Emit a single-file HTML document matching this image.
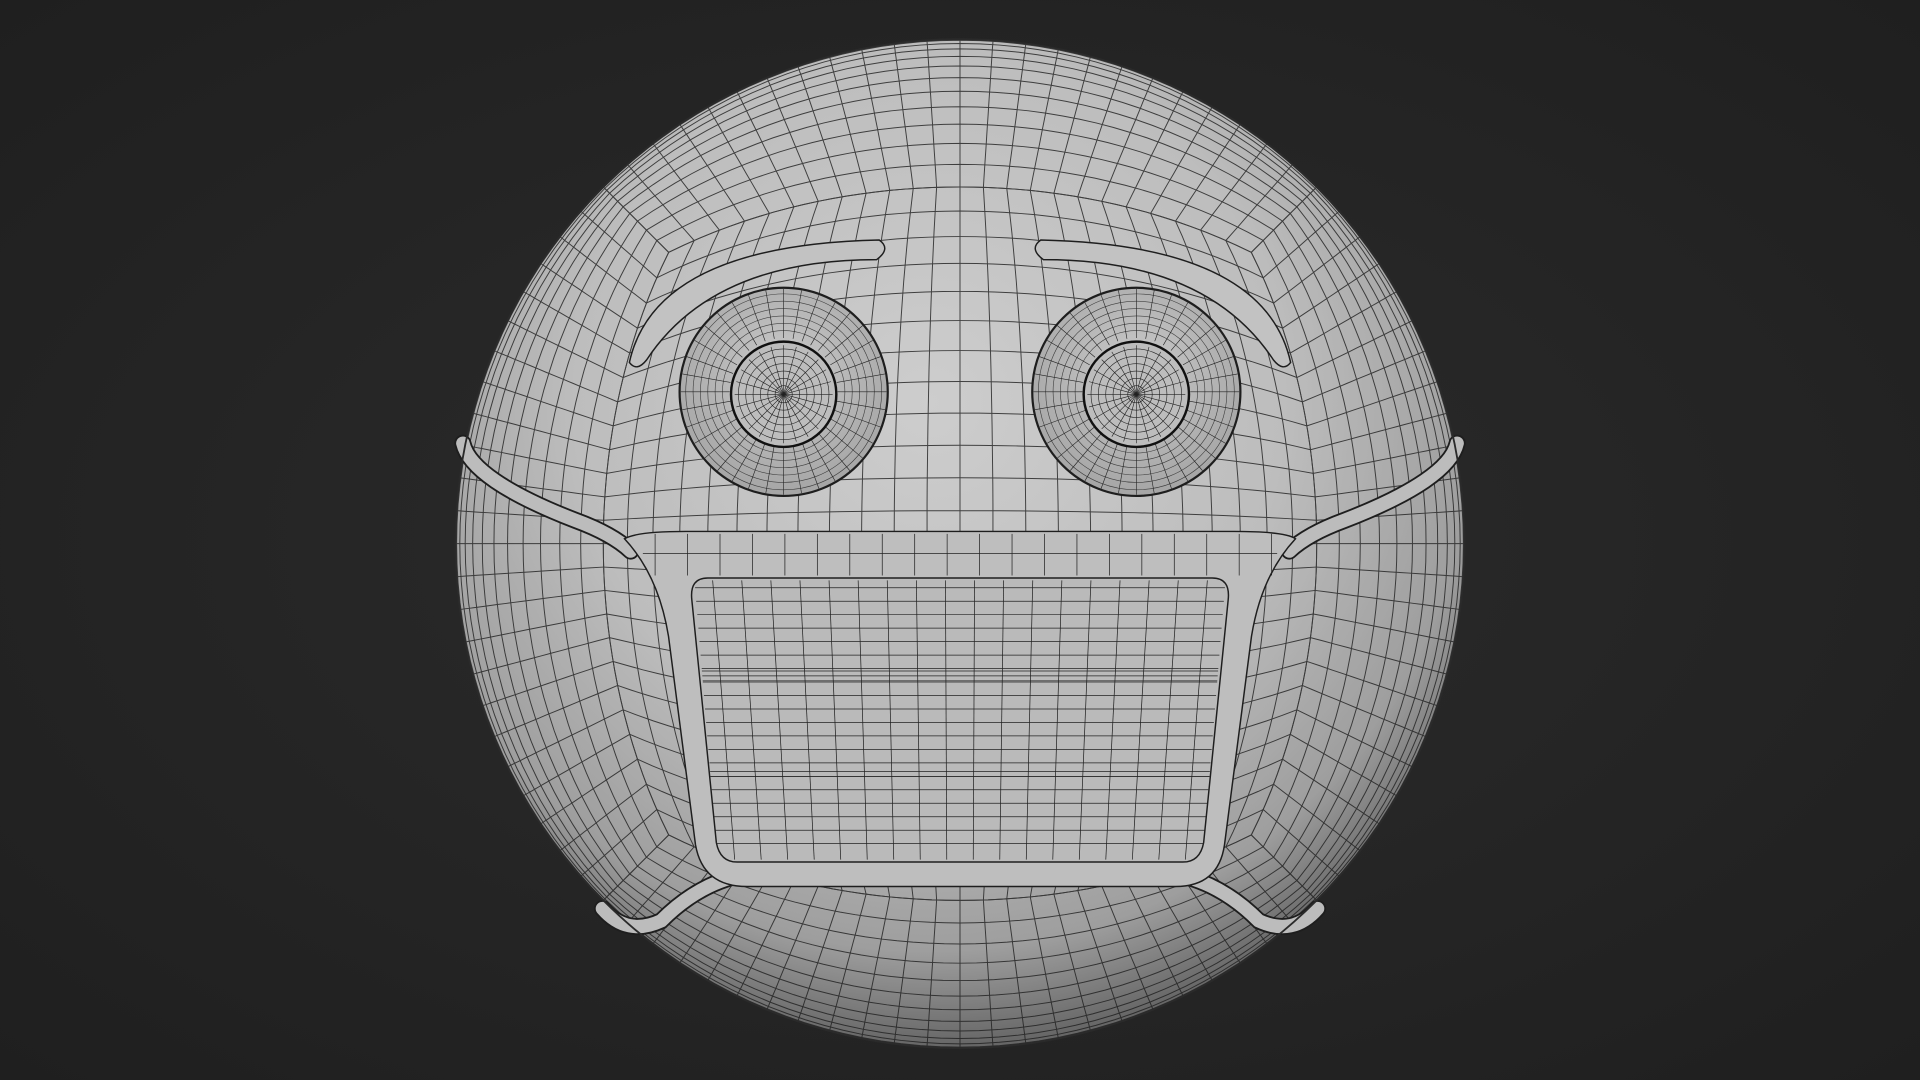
<!DOCTYPE html>
<html><head><meta charset="utf-8"><style>
html,body{margin:0;padding:0;width:1920px;height:1080px;overflow:hidden;background:#222;}
svg{display:block}
</style></head><body>
<svg id="s" width="1920" height="1080" viewBox="0 0 1568 882" xmlns="http://www.w3.org/2000/svg">
<defs>
<radialGradient id="bg" cx="50%" cy="50%" r="70%">
<stop offset="0" stop-color="#2c2c2c"/><stop offset="1" stop-color="#1f1f1f"/>
</radialGradient>
<radialGradient id="sph" cx="47%" cy="36%" r="64%">
<stop offset="0" stop-color="#cdcdcd"/><stop offset="0.55" stop-color="#bdbdbd"/><stop offset="0.85" stop-color="#9e9e9e"/><stop offset="1" stop-color="#666"/>
</radialGradient>
<radialGradient id="eye" cx="50%" cy="40%" r="60%">
<stop offset="0" stop-color="#cacaca"/><stop offset="1" stop-color="#a5a5a5"/>
</radialGradient>
<clipPath id="cp"><circle cx="784" cy="444" r="412"/></clipPath>
</defs>
<rect width="1568" height="882" fill="url(#bg)"/>
<circle cx="784" cy="444" r="412" fill="url(#sph)"/>
<g id="grid" clip-path="url(#cp)" stroke="#1e1e1e" stroke-width="0.8" fill="none" opacity="0.8"></g>
<g id="feat"></g>
<g id="mask" stroke="#222" stroke-width="1" fill="none"></g>
<circle cx="784" cy="444" r="412" fill="none" stroke="#2a2a2a" stroke-width="1.5"/>
</svg>
<script>
(function(){
const NS="http://www.w3.org/2000/svg";
const g=document.getElementById('grid'),F=document.getElementById('feat');
const cx=784,cy=444,R=412;
function el(tg,a,p){const e=document.createElementNS(NS,tg);for(const k in a)e.setAttribute(k,a[k]);(p||g).appendChild(e);return e;}
const faces=[(u,v)=>[u,v,1],(u,v)=>[1,v,-u],(u,v)=>[-1,v,u],(u,v)=>[u,1,-v],(u,v)=>[u,-1,v]];
const N=24,S=40;
function line(f,fixed,isU){let d="",on=false;
 for(let k=0;k<=S;k++){const t=Math.tan(-Math.PI/4+Math.PI/2*k/S);const p=isU?f(fixed,t):f(t,fixed);
  const l=Math.hypot(p[0],p[1],p[2]);const x=p[0]/l,y=p[1]/l,z=p[2]/l;
  if(z>-0.005){d+=(on?"L":"M")+(cx+R*x).toFixed(1)+" "+(cy-R*y).toFixed(1);on=true;}else on=false;}
 if(d)el('path',{d:d});}
for(const f of faces){for(let i=0;i<=N;i++){const c=Math.tan(-Math.PI/4+Math.PI/2*i/N);line(f,c,true);line(f,c,false);}}
function brow(d){el('path',{d:d,fill:'#c2c2c2',stroke:'#1e1e1e','stroke-width':1.2},F);}
brow("M514 296 Q535 200 718 196 Q728 203 716 212 Q582 212 528 294 Q520 304 514 296 Z");
brow("M1054 296 Q1033 200 850 196 Q840 203 852 212 Q986 212 1040 294 Q1048 304 1054 296 Z");
function eye(x,y){
 el('circle',{cx:x,cy:y,r:85,fill:'url(#eye)',stroke:'#1e1e1e','stroke-width':1.8},F);
 for(let r=80;r>44;r-=6)el('circle',{cx:x,cy:y,r:r,fill:'none',stroke:'#222','stroke-width':0.5,opacity:0.8},F);
 for(let a=0;a<36;a++){const th=a*Math.PI/18;el('line',{x1:x+44*Math.cos(th),y1:y+44*Math.sin(th),x2:x+84*Math.cos(th),y2:y+84*Math.sin(th),stroke:'#222','stroke-width':0.5},F);}
 el('circle',{cx:x,cy:y+2,r:43,fill:'#bdbdbd',stroke:'#111','stroke-width':2},F);
 for(let r=37;r>3;r-=6)el('circle',{cx:x,cy:y+2,r:r,fill:'none',stroke:'#222','stroke-width':0.5},F);
 for(let a=0;a<24;a++){const th=a*Math.PI/12;el('line',{x1:x,y1:y+2,x2:x+40*Math.cos(th),y2:y+2+40*Math.sin(th),stroke:'#222','stroke-width':0.5},F);}
}
eye(640,320);eye(928,320);
const m=document.getElementById('mask');
function strap(d){el('path',{d:d,stroke:'#1e1e1e','stroke-width':14,fill:'none','stroke-linecap':'round'},m);el('path',{d:d,stroke:'#bcbcbc','stroke-width':11,fill:'none','stroke-linecap':'round'},m);}
strap("M378 362 Q385 392 470 425 Q500 436 515 450");
strap("M1190 362 Q1183 392 1098 425 Q1068 436 1053 450");
strap("M492 742 Q512 765 540 752 Q580 712 630 712");
strap("M1076 742 Q1056 765 1028 752 Q988 712 938 712");
el('path',{d:"M510 440 Q520 434 560 434 L1008 434 Q1050 434 1058 440 Q1030 470 1022 520 L1000 690 Q995 724 960 724 L610 724 Q574 724 568 690 L546 520 Q538 470 510 440 Z",fill:'#bebebe',stroke:'#1e1e1e','stroke-width':1.2},m);
el('path',{d:"M578 472 L990 472 Q1005 472 1003 490 L983 688 Q980 704 966 704 L602 704 Q588 704 585 688 L565 490 Q563 472 578 472 Z",fill:'#bababa',stroke:'#1e1e1e','stroke-width':1.2},m);
for(let y=480;y<700;y+=11){const k=(y-472)/232;const l=567+k*19,r=1001-k*19;el('line',{x1:l,y1:y,x2:r,y2:y,stroke:'#222','stroke-width':0.6},m);}
for(let y of [548,552,556,630,634]){const k=(y-472)/232;el('line',{x1:567+k*19,y1:y,x2:1001-k*19,y2:y,stroke:'#222','stroke-width':0.6},m);}
for(let i=0;i<=17;i++){const xt=582+i*(404/17),xb=600+i*(368/17);el('line',{x1:xt,y1:474,x2:xb,y2:702,stroke:'#222','stroke-width':0.6},m);}
for(let i=0;i<=19;i++){const x=535+i*26.5;el('line',{x1:x,y1:436,x2:x,y2:470,stroke:'#222','stroke-width':0.6},m);}
el('line',{x1:525,y1:452,x2:1043,y2:452,stroke:'#222','stroke-width':0.6},m);
})();
</script>
</body></html>
